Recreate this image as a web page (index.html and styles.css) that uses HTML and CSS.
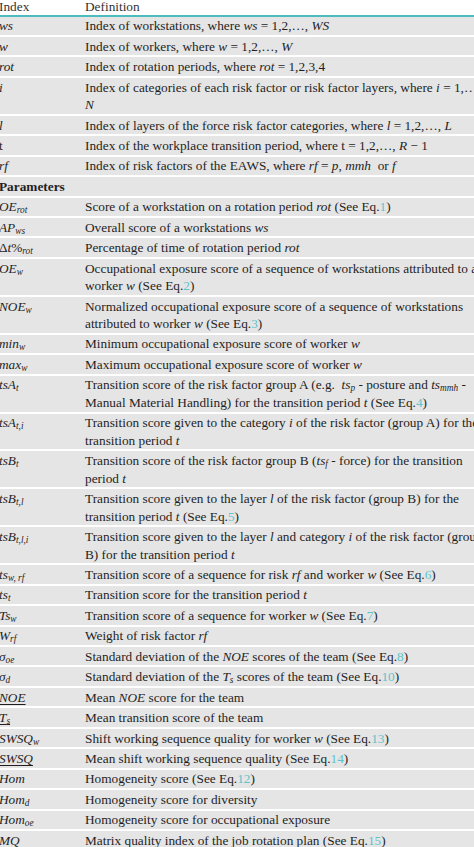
FILE: index.html
```html
<!DOCTYPE html>
<html>
<head>
<meta charset="utf-8">
<link rel="stylesheet" href="styles.css">
</head>
<body>
<div class="table">
  <div class="row head"><div class="sym">Index</div><div class="def">Definition</div></div>
  <div class="row"><div class="sym"><i>ws</i></div><div class="def">Index of workstations, where <i>ws</i> = 1,2,…, <i>WS</i></div></div>
  <div class="row"><div class="sym"><i>w</i></div><div class="def">Index of workers, where <i>w</i> = 1,2,…, <i>W</i></div></div>
  <div class="row"><div class="sym"><i>rot</i></div><div class="def">Index of rotation periods, where <i>rot</i> = 1,2,3,4</div></div>
  <div class="row"><div class="sym"><i>i</i></div><div class="def">Index of categories of each risk factor or risk factor layers, where <i>i</i> = 1,…,<br><i>N</i></div></div>
  <div class="row"><div class="sym"><i>l</i></div><div class="def">Index of layers of the force risk factor categories, where <i>l</i> = 1,2,…, <i>L</i></div></div>
  <div class="row"><div class="sym">t</div><div class="def">Index of the workplace transition period, where t = 1,2,…, <i>R</i> − 1</div></div>
  <div class="row"><div class="sym"><i>rf</i></div><div class="def">Index of risk factors of the EAWS, where <i>rf</i> = <i>p</i>, <i>mmh</i>&nbsp; or <i>f</i></div></div>
  <div class="row"><div class="sym section">Parameters</div><div class="def"></div></div>
  <div class="row"><div class="sym"><i>OE<sub>rot</sub></i></div><div class="def">Score of a workstation on a rotation period <i>rot</i> (See Eq.<span class="eq">1</span>)</div></div>
  <div class="row"><div class="sym"><i>AP<sub>ws</sub></i></div><div class="def">Overall score of a workstations <i>ws</i></div></div>
  <div class="row"><div class="sym">Δ<i>t</i>%<sub><i>rot</i></sub></div><div class="def">Percentage of time of rotation period <i>rot</i></div></div>
  <div class="row"><div class="sym"><i>OE<sub>w</sub></i></div><div class="def">Occupational exposure score of a sequence of workstations attributed to a<br>worker <i>w</i> (See Eq.<span class="eq">2</span>)</div></div>
  <div class="row"><div class="sym"><i>NOE<sub>w</sub></i></div><div class="def">Normalized occupational exposure score of a sequence of workstations<br>attributed to worker <i>w</i> (See Eq.<span class="eq">3</span>)</div></div>
  <div class="row"><div class="sym"><i>min<sub>w</sub></i></div><div class="def">Minimum occupational exposure score of worker <i>w</i></div></div>
  <div class="row"><div class="sym"><i>max<sub>w</sub></i></div><div class="def">Maximum occupational exposure score of worker <i>w</i></div></div>
  <div class="row"><div class="sym"><i>tsA<sub>t</sub></i></div><div class="def">Transition score of the risk factor group A (e.g. &nbsp;<i>ts<sub>p</sub></i> - posture and <i>ts<sub>mmh</sub></i> -<br>Manual Material Handling) for the transition period <i>t</i> (See Eq.<span class="eq">4</span>)</div></div>
  <div class="row"><div class="sym"><i>tsA<sub>t,i</sub></i></div><div class="def">Transition score given to the category <i>i</i> of the risk factor (group A) for the<br>transition period <i>t</i></div></div>
  <div class="row"><div class="sym"><i>tsB<sub>t</sub></i></div><div class="def">Transition score of the risk factor group B (<i>ts<sub>f</sub></i> - force) for the transition<br>period <i>t</i></div></div>
  <div class="row"><div class="sym"><i>tsB<sub>t,l</sub></i></div><div class="def">Transition score given to the layer <i>l</i> of the risk factor (group B) for the<br>transition period <i>t</i> (See Eq.<span class="eq">5</span>)</div></div>
  <div class="row"><div class="sym"><i>tsB<sub>t,l,i</sub></i></div><div class="def">Transition score given to the layer <i>l</i> and category <i>i</i> of the risk factor (group<br>B) for the transition period <i>t</i></div></div>
  <div class="row"><div class="sym"><i>ts<sub>w, rf</sub></i></div><div class="def">Transition score of a sequence for risk <i>rf</i> and worker <i>w</i> (See Eq.<span class="eq">6</span>)</div></div>
  <div class="row"><div class="sym"><i>ts<sub>t</sub></i></div><div class="def">Transition score for the transition period <i>t</i></div></div>
  <div class="row"><div class="sym"><i>Ts<sub>w</sub></i></div><div class="def">Transition score of a sequence for worker <i>w</i> (See Eq.<span class="eq">7</span>)</div></div>
  <div class="row"><div class="sym"><i>W<sub>rf</sub></i></div><div class="def">Weight of risk factor <i>rf</i></div></div>
  <div class="row"><div class="sym"><i>σ<sub>oe</sub></i></div><div class="def">Standard deviation of the <i>NOE</i> scores of the team (See Eq.<span class="eq">8</span>)</div></div>
  <div class="row"><div class="sym"><i>σ<sub>d</sub></i></div><div class="def">Standard deviation of the <i>T<sub>s</sub></i> scores of the team (See Eq.<span class="eq">10</span>)</div></div>
  <div class="row"><div class="sym"><i class="ul">NOE</i></div><div class="def">Mean <i>NOE</i> score for the team</div></div>
  <div class="row"><div class="sym"><i class="ul">T<sub>s</sub></i></div><div class="def">Mean transition score of the team</div></div>
  <div class="row"><div class="sym"><i>SWSQ<sub>w</sub></i></div><div class="def">Shift working sequence quality for worker <i>w</i> (See Eq.<span class="eq">13</span>)</div></div>
  <div class="row"><div class="sym"><i class="ul">SWSQ</i></div><div class="def">Mean shift working sequence quality (See Eq.<span class="eq">14</span>)</div></div>
  <div class="row"><div class="sym"><i>Hom</i></div><div class="def">Homogeneity score (See Eq.<span class="eq">12</span>)</div></div>
  <div class="row"><div class="sym"><i>Hom<sub>d</sub></i></div><div class="def">Homogeneity score for diversity</div></div>
  <div class="row"><div class="sym"><i>Hom<sub>oe</sub></i></div><div class="def">Homogeneity score for occupational exposure</div></div>
  <div class="row"><div class="sym"><i>MQ</i></div><div class="def">Matrix quality index of the job rotation plan (See Eq.<span class="eq">15</span>)</div></div>
</div>
</body>
</html>
```

FILE: styles.css
```css
html, body {
  margin: 0;
  padding: 0;
  overflow: hidden;
  background: #ffffff;
}

body {
  font-family: "Liberation Serif", "Times New Roman", serif;
  font-size: 13.3px;
  color: #1f1f1f;
}

.table {
  width: 520px;
  margin-left: -1px;
}

.row {
  display: grid;
  grid-template-columns: 86px 1fr;
  background: #e5e5e5;
  margin-bottom: 2px;
  line-height: 17.5px;
  padding: 0.75px 0 0.2px;
  white-space: nowrap;
}

.row.head {
  background: #ffffff;
  border-bottom: 2px solid #4dbcbf;
  margin-bottom: 0;
  padding: 0;
  line-height: 14.5px;
  color: #333;
}

.section {
  font-weight: bold;
}

sub {
  font-size: 70%;
  line-height: 0;
  vertical-align: -0.25em;
}

.eq {
  color: #5ec3cb;
}

.ul {
  text-decoration: underline;
  text-underline-offset: 2px;
}
```
